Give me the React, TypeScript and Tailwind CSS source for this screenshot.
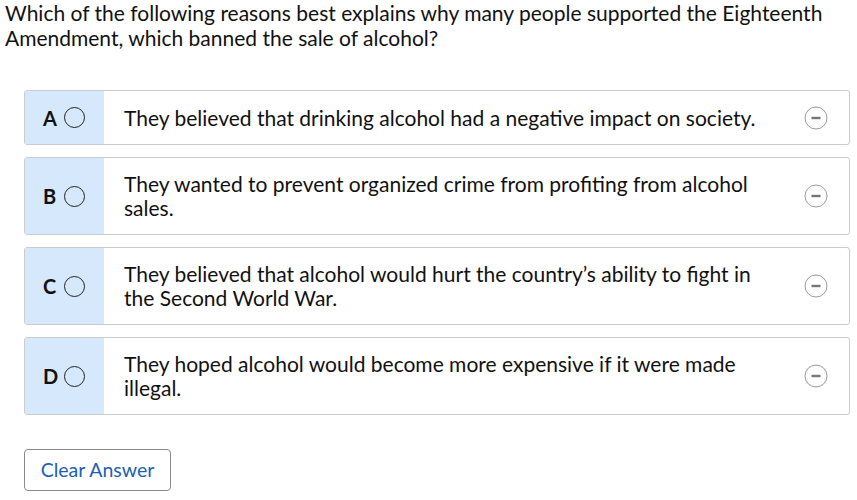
import React from "react";

const options = [
  { letter: "A", text: "They believed that drinking alcohol had a negative impact on society.", h: "h-[55px]" },
  { letter: "B", text: "They wanted to prevent organized crime from profiting from alcohol sales.", h: "h-[78px]" },
  { letter: "C", text: "They believed that alcohol would hurt the country\u2019s ability to fight in the Second World War.", h: "h-[78px]" },
  { letter: "D", text: "They hoped alcohol would become more expensive if it were made illegal.", h: "h-[78px]" },
];

function MinusCircle() {
  return (
    <svg width="24" height="24" viewBox="0 0 24 24" className="shrink-0">
      <circle cx="12" cy="12" r="11" fill="white" stroke="#9a9a9a" strokeWidth="1" />
      <rect x="7.5" y="10.8" width="9" height="2.4" fill="#777" />
    </svg>
  );
}

export default function App() {
  return (
    <div className="bg-white min-h-[500px] w-[857px] text-[#111] font-['Lato',sans-serif]">
      <div className="pl-[5px] pt-0 text-[21px] leading-[25px] w-[845px]">
        Which of the following reasons best explains why many people supported the Eighteenth Amendment, which banned the sale of alcohol?
      </div>
      <div className="ml-[24px] mt-[40px] w-[826px] flex flex-col gap-[12px]">
        {options.map((o) => (
          <div key={o.letter} className={`flex ${o.h} border border-[#cccccc] rounded-[3px] overflow-hidden`}>
            <div className="w-[79px] shrink-0 bg-[#d5e8fc] flex items-center pl-[18px] gap-[9px]">
              <span className="font-bold text-[20px] w-[12px] text-center">{o.letter}</span>
              <span className="w-[21px] h-[21px] rounded-full border-[1.5px] border-[#222] bg-transparent" />
            </div>
            <div className="flex-1 flex items-center pl-[20px] pr-[20px] text-[21px] leading-[24px]">
              <span className="w-[645px]">{o.text}</span>
            </div>
            <div className="w-[60px] flex items-center justify-center pr-[6px]">
              <MinusCircle />
            </div>
          </div>
        ))}
      </div>
      <button className="ml-[24px] mt-[34px] w-[147px] h-[42px] border border-[#8a8a8a] rounded-[4px] text-[#1c5fb3] text-[19.5px] bg-white">
        Clear Answer
      </button>
    </div>
  );
}
